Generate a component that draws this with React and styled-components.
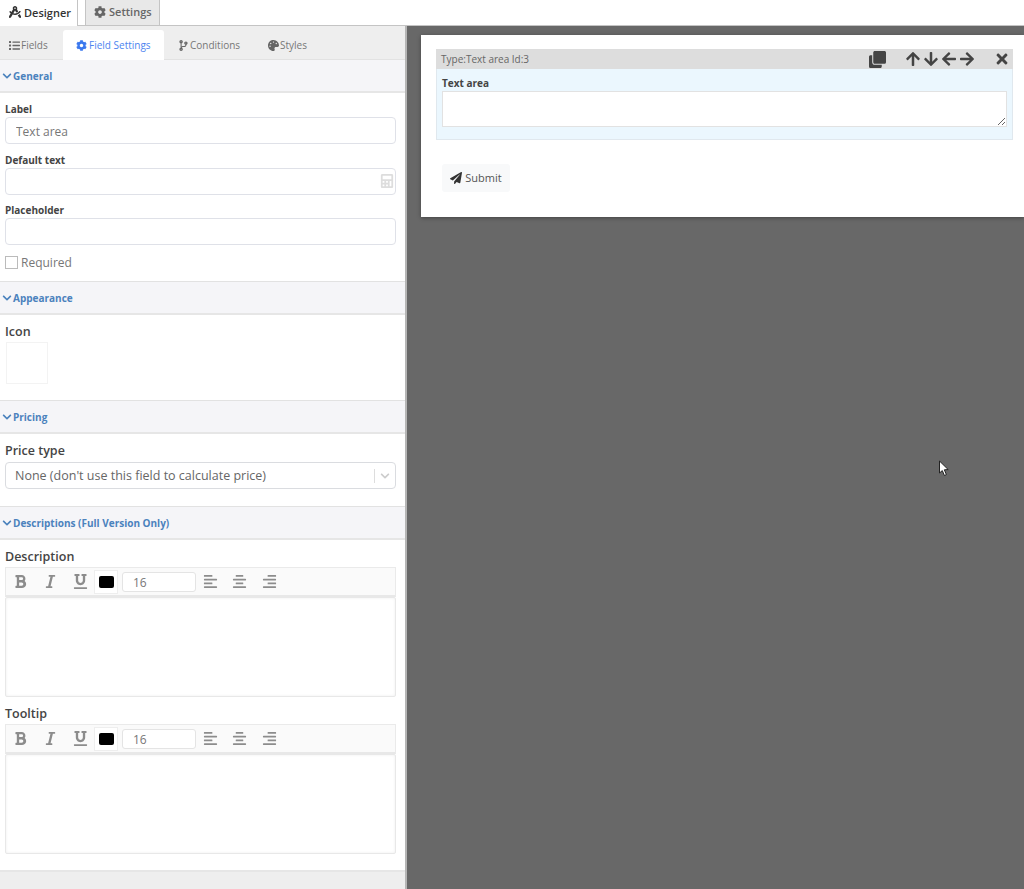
import styled, { createGlobalStyle } from "styled-components";
import {
  FaList, FaCog, FaCodeBranch, FaPalette, FaPaperPlane, FaClone, FaArrowUp, FaArrowDown,
  FaArrowLeft, FaArrowRight, FaTimes, FaBold, FaItalic, FaUnderline, FaAlignLeft,
  FaAlignCenter, FaAlignRight, FaChevronDown, FaDraftingCompass, FaCalculator,
} from "react-icons/fa";

const GlobalStyle = createGlobalStyle`
  html, body { margin: 0; padding: 0; }
  body { font-family: "Open Sans", "Noto Sans", sans-serif; color: #444; background: #fff; }
  * { box-sizing: border-box; }
`;

const Page = styled.div`
  position: relative;
  width: 1024px;
  height: 889px;
  overflow: hidden;
  display: flex;
  flex-direction: column;
`;
const TopTabs = styled.div`
  height: 26px;
  display: flex;
  gap: 7px;
  border-bottom: 1px solid #c4c4c4;
`;
const TopTab = styled.div`
  width: ${(p) => p.$width}px;
  height: ${(p) => (p.$active ? 26 : 25)}px;
  display: flex;
  align-items: center;
  gap: 3px;
  padding-left: ${(p) => p.$pad}px;
  padding-bottom: 2px;
  font-size: 11px;
  font-weight: 600;
  color: ${(p) => (p.$active ? "#333" : "#666")};
  background: ${(p) => (p.$active ? "#fff" : "#e8e8e8")};
  border-right: 1px solid #c4c4c4;
  border-left: ${(p) => (p.$active ? "none" : "1px solid #c4c4c4")};
  svg { font-size: 12px; flex: none; }
`;
const Main = styled.div`
  flex: 1;
  display: flex;
  min-height: 0;
`;
const Sidebar = styled.div`
  width: 405px;
  display: flex;
  flex-direction: column;
  background: #fff;
`;
const Divider = styled.div`
  width: 2px;
  background: #b5b5b5;
`;
const SubTabs = styled.div`
  height: 34px;
  flex: none;
  display: flex;
  align-items: flex-end;
  background: #eee;
  border-bottom: 1px solid #e2e2e2;
`;
const SubTab = styled.div`
  height: ${(p) => (p.$active ? 30 : 28)}px;
  width: ${(p) => p.$width}px;
  padding-left: ${(p) => p.$pad}px;
  margin-bottom: ${(p) => (p.$active ? -1 : 0)}px;
  display: flex;
  align-items: center;
  gap: ${(p) => (p.$active ? 2 : 1)}px;
  font-size: 10px;
  color: ${(p) => (p.$active ? "#4d84f0" : "#777")};
  background: ${(p) => (p.$active ? "#fff" : "transparent")};
  border-radius: 3px 3px 0 0;
  svg { font-size: 11px; flex: none; color: ${(p) => (p.$active ? "#3b78ee" : "#666")}; }
`;
const SectionHeader = styled.div`
  height: ${(p) => p.$height || 34}px;
  flex: none;
  display: flex;
  align-items: center;
  gap: 1px;
  padding-left: 2px;
  background: #f5f5f8;
  border-top: ${(p) => (p.$noTop ? "none" : "1px solid #e2e2e2")};
  border-bottom: 2px solid #e6e6e6;
  font-size: 10px;
  font-weight: 700;
  color: #4b82bd;
  svg { font-size: 10px; }
`;
const SectionBody = styled.div`
  height: ${(p) => p.$height}px;
  flex: none;
  padding: ${(p) => p.$top}px 9px 0 5px;
`;
const SmallLabel = styled.div`
  height: 14px;
  line-height: 12px;
  font-size: 10px;
  font-weight: 700;
  color: #444;
  margin-top: ${(p) => p.$top || 0}px;
`;
const BigLabel = styled.div`
  height: 16px;
  line-height: 16px;
  font-size: 12.5px;
  font-weight: 600;
  color: #444;
  margin-top: ${(p) => p.$top || 0}px;
`;
const InputWrap = styled.div`
  position: relative;
  svg {
    position: absolute;
    right: 2px;
    top: 6px;
    font-size: 14px;
    color: #ddd;
  }
`;
const TextInput = styled.input`
  display: block;
  width: 100%;
  height: 27px;
  padding: 1px 10px 0;
  border: 1px solid #dfe1e8;
  border-radius: 4px;
  background: #fff;
  font-family: inherit;
  font-size: 12px;
  color: #777;
  outline: none;
`;
const CheckRow = styled.div`
  display: flex;
  align-items: center;
  gap: 3px;
  margin-top: 9px;
  font-size: 12px;
  color: #777;
`;
const CheckBox = styled.span`
  width: 13px;
  height: 13px;
  border: 1px solid #bbb;
  background: #fff;
`;
const IconBox = styled.div`
  width: 42px;
  height: 42px;
  margin: 2px 0 0 1px;
  border: 1px solid #f3f3f3;
`;
const SelectBox = styled.div`
  height: 27px;
  margin-top: 3px;
  display: flex;
  align-items: center;
  padding-left: 9px;
  border: 1px solid #dadce0;
  border-radius: 4px;
  font-size: 12.5px;
  color: #666;
  span:first-child { flex: 1; }
`;
const SelectArrow = styled.span`
  width: 21px;
  height: 14px;
  display: flex;
  align-items: center;
  justify-content: center;
  border-left: 1px solid #ddd;
  color: #ccc;
  svg { font-size: 10px; }
`;
const Toolbar = styled.div`
  height: 30px;
  margin-top: 2px;
  display: flex;
  align-items: center;
  background: #fafafa;
  border: 1px solid #eaeaea;
  border-bottom: 2px solid #e8e8e8;
  color: #8c8c8c;
`;
const ToolButton = styled.span`
  width: ${(p) => p.$width || 30}px;
  display: flex;
  justify-content: center;
  svg { font-size: 15px; }
`;
const ColorSwatch = styled.span`
  width: 24px;
  height: 24px;
  margin-left: -1px;
  display: flex;
  align-items: center;
  justify-content: center;
  background: #fff;
  border: 1px solid #eee;
  &::after {
    content: "";
    width: 15px;
    height: 12px;
    border-radius: 2px;
    background: #000;
  }
`;
const SizeInput = styled.span`
  width: 74px;
  height: 20px;
  margin-left: 4px;
  padding-left: 10px;
  line-height: 19px;
  background: #fff;
  border: 1px solid #e4e4e4;
  border-radius: 3px;
  font-size: 12px;
  color: #777;
`;
const Editor = styled.div`
  height: 100px;
  background: #fff;
  border: 1px solid #e8e8e8;
  border-radius: 2px;
  box-shadow: inset 0 0 3px #eee;
`;
const SidebarFooter = styled.div`
  flex: 1;
  background: #eee;
  border-top: 2px solid #e6e6e6;
`;
const Canvas = styled.div`
  flex: 1;
  background: #686868;
  padding: 9px 0 0 14px;
`;
const Card = styled.div`
  height: 182px;
  background: #fff;
  padding: 14px 11px 0 15px;
  box-shadow: 0 1px 4px rgba(0, 0, 0, 0.35);
`;
const FieldShell = styled.div`
  height: 91px;
  background: #ebf7fe;
  border: 1px solid #e0e8ee;
  border-top: none;
`;
const FieldBar = styled.div`
  height: 20px;
  display: flex;
  align-items: center;
  padding-left: 5px;
  margin-left: -1px;
  margin-right: -1px;
  background: #ddd;
  font-size: 10px;
  color: #666;
  span:first-child { flex: 1; }
`;
const BarIcons = styled.div`
  display: flex;
  align-items: center;
  color: #444;
  padding-right: 3px;
`;
const BarIcon = styled.span`
  display: flex;
  margin-left: ${(p) => p.$gap || 0}px;
  svg { font-size: ${(p) => p.$size || 16}px; }
`;
const FieldBody = styled.div`
  padding: 8px 5px 0 5px;
`;
const FieldLabel = styled.div`
  height: 14px;
  line-height: 13px;
  font-size: 10px;
  font-weight: 700;
  color: #444;
`;
const FieldArea = styled.textarea`
  display: block;
  width: 100%;
  height: 36px;
  border: 1px solid #e2e2e2;
  background: #fff;
  outline: none;
`;
const SubmitButton = styled.div`
  width: 68px;
  height: 28px;
  margin: 24px 0 0 6px;
  padding-bottom: 1px;
  display: flex;
  align-items: center;
  justify-content: center;
  gap: 3px;
  background: #f8f9fa;
  border-radius: 3px;
  font-size: 11px;
  color: #555;
  svg { font-size: 12px; color: #333; }
`;
const Cursor = styled.svg`
  position: absolute;
  left: 938px;
  top: 460px;
`;

function RichField({ label, top }) {
  return (
    <>
      <BigLabel $top={top}>{label}</BigLabel>
      <Toolbar>
        <ToolButton $width={29}><FaBold /></ToolButton>
        <ToolButton><FaItalic /></ToolButton>
        <ToolButton><FaUnderline /></ToolButton>
        <ColorSwatch />
        <SizeInput>16</SizeInput>
        <ToolButton $width={28}><FaAlignLeft /></ToolButton>
        <ToolButton><FaAlignCenter /></ToolButton>
        <ToolButton><FaAlignRight /></ToolButton>
      </Toolbar>
      <Editor />
    </>
  );
}

export default function App() {
  return (
    <Page>
      <GlobalStyle />
      <TopTabs>
        <TopTab $active $width={78} $pad={9}><FaDraftingCompass />Designer</TopTab>
        <TopTab $width={75} $pad={8}><FaCog />Settings</TopTab>
      </TopTabs>
      <Main>
        <Sidebar>
          <SubTabs>
            <SubTab $width={63} $pad={9}><FaList />Fields</SubTab>
            <SubTab $active $width={101} $pad={13}><FaCog />Field Settings</SubTab>
            <SubTab $width={90} $pad={14}><FaCodeBranch />Conditions</SubTab>
            <SubTab $width={90} $pad={14}><FaPalette />Styles</SubTab>
          </SubTabs>
          <SectionHeader $noTop $height={33}><FaChevronDown />General</SectionHeader>
          <SectionBody $height={188} $top={10}>
            <SmallLabel>Label</SmallLabel>
            <TextInput readOnly value="Text area" />
            <SmallLabel $top={10}>Default text</SmallLabel>
            <InputWrap>
              <TextInput readOnly />
              <FaCalculator />
            </InputWrap>
            <SmallLabel $top={9}>Placeholder</SmallLabel>
            <TextInput readOnly />
            <CheckRow><CheckBox />Required</CheckRow>
          </SectionBody>
          <SectionHeader><FaChevronDown />Appearance</SectionHeader>
          <SectionBody $height={85} $top={9}>
            <BigLabel>Icon</BigLabel>
            <IconBox />
          </SectionBody>
          <SectionHeader><FaChevronDown />Pricing</SectionHeader>
          <SectionBody $height={72} $top={9}>
            <BigLabel>Price type</BigLabel>
            <SelectBox>
              <span>None (don't use this field to calculate price)</span>
              <SelectArrow><FaChevronDown /></SelectArrow>
            </SelectBox>
          </SectionBody>
          <SectionHeader><FaChevronDown />Descriptions (Full Version Only)</SectionHeader>
          <SectionBody $height={330} $top={9}>
            <RichField label="Description" />
            <RichField label="Tooltip" top={9} />
          </SectionBody>
          <SidebarFooter />
        </Sidebar>
        <Divider />
        <Canvas>
          <Card>
            <FieldShell>
              <FieldBar>
                <span>Type:Text area Id:3</span>
                <BarIcons>
                  <BarIcon $size={17}><FaClone /></BarIcon>
                  <BarIcon $gap={19}><FaArrowUp /></BarIcon>
                  <BarIcon $gap={2}><FaArrowDown /></BarIcon>
                  <BarIcon $gap={2}><FaArrowLeft /></BarIcon>
                  <BarIcon $gap={2}><FaArrowRight /></BarIcon>
                  <BarIcon $gap={19}><FaTimes /></BarIcon>
                </BarIcons>
              </FieldBar>
              <FieldBody>
                <FieldLabel>Text area</FieldLabel>
                <FieldArea readOnly />
              </FieldBody>
            </FieldShell>
            <SubmitButton><FaPaperPlane />Submit</SubmitButton>
          </Card>
        </Canvas>
      </Main>
      <Cursor width="12" height="18" viewBox="0 0 12 18">
        <path d="M1.5 1 L1.5 13 L4.3 10.6 L6.4 15.5 L8.4 14.6 L6.3 9.8 L10.2 9.6 Z" fill="#fff" stroke="#222" strokeWidth="1" />
      </Cursor>
    </Page>
  );
}
